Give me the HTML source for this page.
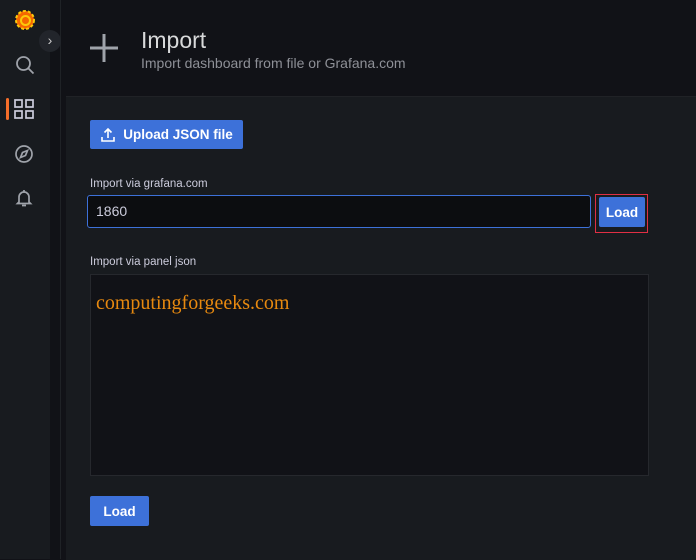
<!DOCTYPE html><html><head><style>
body{margin:0;width:696px;height:559px;background:#111217;font-family:"Liberation Sans",sans-serif;position:relative;overflow:hidden;color:#ccccdc}
.a{position:absolute}
.btn{position:absolute;background:#3d71d9;color:#fff;font-size:13.5px;font-weight:bold;border-radius:2px;display:flex;align-items:center;justify-content:center}
.lbl{position:absolute;font-size:11.5px;color:#ccccdc}
</style></head><body>
<div class="a" style="left:0;top:0;width:50px;height:559px;background:#181b1f"></div>
<div class="a" style="left:60px;top:0;width:1px;height:559px;background:#1f2226"></div>
<div class="a" style="left:66px;top:96px;width:630px;height:463px;background:#181b1f;border-top:1px solid #202226"></div>
<svg class="a" style="left:13px;top:8px" width="24" height="24" viewBox="0 0 24 24"><circle cx="12" cy="12" r="9" fill="#f46800"/><circle cx="12" cy="12" r="9" fill="none" stroke="#fbca0a" stroke-width="2" stroke-dasharray="3 2"/><circle cx="12.5" cy="12.5" r="4.5" fill="none" stroke="#fbca0a" stroke-width="2"/><circle cx="12.5" cy="12.5" r="2" fill="#f46800"/></svg>
<div class="a" style="left:39px;top:30px;width:22px;height:22px;border-radius:50%;background:#22252b;color:#ccc;font-size:14px;text-align:center;line-height:21px">›</div>
<svg class="a" style="left:14px;top:54px" width="22" height="22" viewBox="0 0 22 22" fill="none" stroke="#9fa3aa" stroke-width="1.8"><circle cx="9.5" cy="9.5" r="6.5"/><path d="M14.5 14.5l5 5"/></svg>
<div class="a" style="left:6px;top:98px;width:3px;height:22px;background:#f56e2a;border-radius:2px"></div>
<svg class="a" style="left:14px;top:99px" width="20" height="20" viewBox="0 0 20 20" fill="none" stroke="#ccccdc" stroke-width="1.7"><rect x="1" y="1" width="7" height="7"/><rect x="12" y="1" width="7" height="7"/><rect x="1" y="12" width="7" height="7"/><rect x="12" y="12" width="7" height="7"/></svg>
<svg class="a" style="left:14px;top:144px" width="20" height="20" viewBox="0 0 20 20" fill="none" stroke="#9fa3aa" stroke-width="1.7"><circle cx="10" cy="10" r="8"/><path d="M13.5 6.5l-2 5-5 2 2-5z"/></svg>
<svg class="a" style="left:15px;top:188px" width="18" height="20" viewBox="0 0 18 20" fill="none" stroke="#9fa3aa" stroke-width="1.7"><path d="M9 2v1.5M4 14V9a5 5 0 0110 0v5l1.5 1.5h-13z M7 17.5h4"/></svg>
<svg class="a" style="left:88px;top:32px" width="32" height="32" viewBox="0 0 32 32" stroke="#9fa3aa" stroke-width="3"><path d="M16 2v28M2 16h28"/></svg>
<div class="a" style="left:141px;top:27px;font-size:23px;color:#d8d9da">Import</div>
<div class="a" style="left:141px;top:55px;font-size:14px;color:#8e9097">Import dashboard from file or Grafana.com</div>
<div class="btn" style="left:90px;top:120px;width:153px;height:29px">
<svg width="16" height="16" viewBox="0 0 16 16" fill="none" stroke="#fff" stroke-width="1.6" style="margin-right:7px"><path d="M8 11V2M4.5 5.5L8 2l3.5 3.5M2 10v4h12v-4"/></svg>Upload JSON file</div>
<div class="lbl" style="left:90px;top:178px">Import via grafana.com</div>
<div class="a" style="left:87px;top:195px;width:502px;height:31px;background:#0c0d10;border:1.5px solid #3d71d9;border-radius:3px;font-size:14px;color:#ccccdc;line-height:31px;text-indent:8px">1860</div>
<div class="a" style="left:595px;top:194px;width:51px;height:37px;border:1.5px solid #e02f44"></div>
<div class="btn" style="left:599px;top:197px;width:46px;height:30px">Load</div>
<div class="lbl" style="left:90px;top:256px">Import via panel json</div>
<div class="a" style="left:90px;top:274px;width:557px;height:200px;background:#111217;border:1px solid #26282d"></div>
<div class="a" style="left:96px;top:292px;font-family:'Liberation Serif',serif;font-size:20px;color:#e8890f">computingforgeeks.com</div>
<div class="btn" style="left:90px;top:496px;width:59px;height:30px">Load</div>
</body></html>
